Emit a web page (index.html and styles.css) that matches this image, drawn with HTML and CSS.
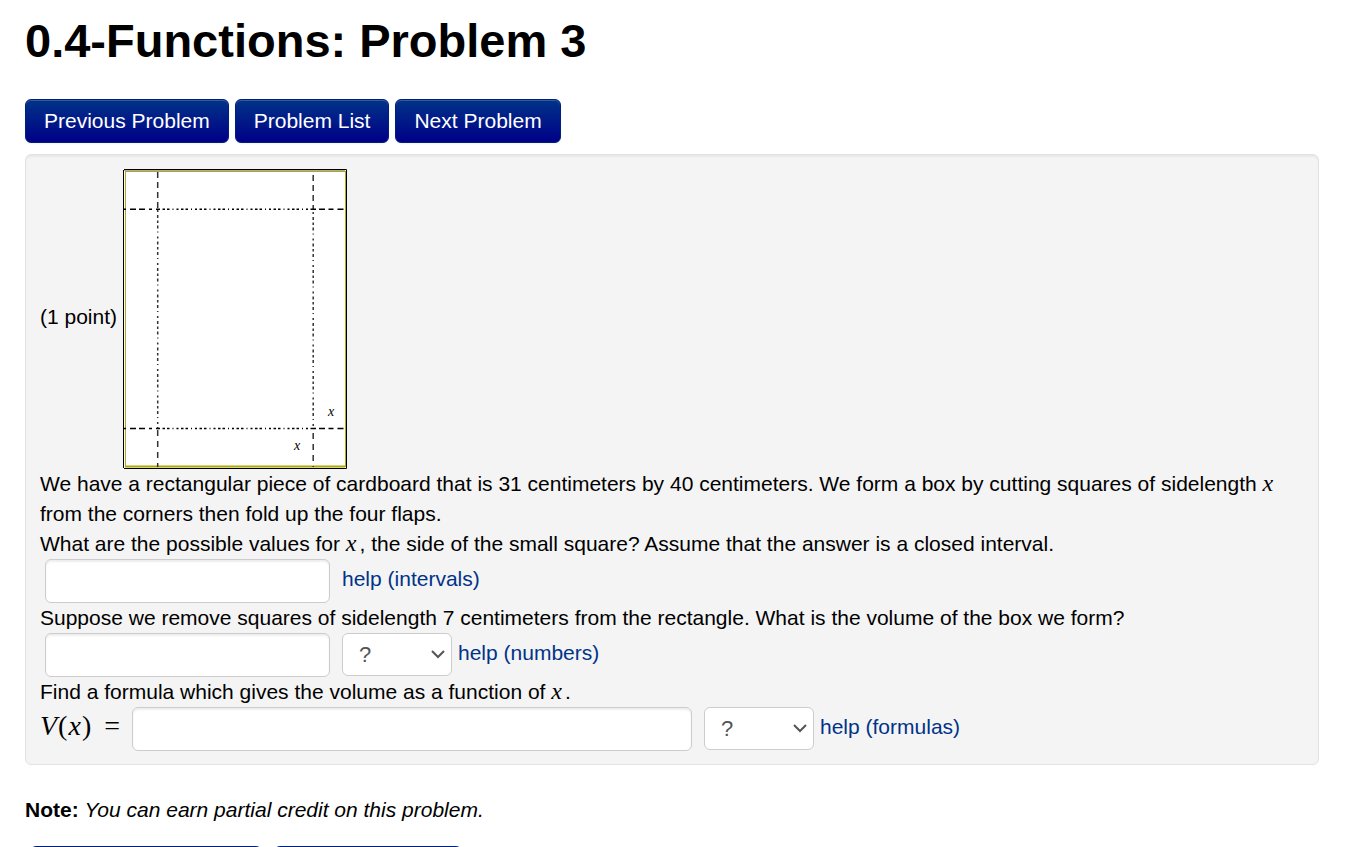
FILE: index.html
```html
<!DOCTYPE html>
<html lang="en">
<head>
<meta charset="utf-8">
<title>0.4-Functions: Problem 3</title>
<link rel="stylesheet" href="styles.css">
</head>
<body>
<main class="page">
  <h1 class="title">0.4-Functions: Problem 3</h1>
  <nav class="nav">
    <a class="btn" href="#previous">Previous Problem</a>
    <a class="btn" href="#list">Problem List</a>
    <a class="btn" href="#next">Next Problem</a>
  </nav>
  <form class="form">
    <section class="problem">
      <div class="figure-row">
        <span class="points">(1 point)</span>
        <svg class="figure" width="224" height="300" viewBox="0 0 224 300" role="img" aria-label="Rectangle with a square of side x marked at each corner">
          <rect width="224" height="300" fill="#fff"/>
          <path d="M2.500 2V298M222.500 2V298M2 2.500H222" fill="none" stroke="#b0aa1c"/>
          <path d="M1 1.500H222" stroke="#aaa"/>
          <path d="M2 297.500H222" stroke="#b0aa00" stroke-width="2"/>
          <path d="M.5 1V299M1 .5H223.500V299.500H1" fill="none" stroke="#000"/>
          <g fill="none" stroke="#333" stroke-width="1.500">
            <path d="M34.700 3V40M190.200 6V40" stroke-dasharray="6 4"/>
            <path d="M34.700 261V298M190.200 264V298" stroke-dasharray="6 5"/>
            <path d="M34.700 41V260M190.200 43V260" stroke-dasharray="2 3 3 2.500 2.500 2.500 3 3 1 4"/>
          </g>
          <g fill="none" stroke="#000" stroke-width="1.500">
            <path d="M0 40.300H35M0 259.500H35" stroke-dasharray="3 4 6 3 6 4"/>
            <path d="M190 40.300H221M190 259.500H221" stroke-dasharray="3 3 6 3.500 5 4 6 4"/>
            <path d="M35 40.300H190M35 259.500H190" stroke-dasharray="2 2.500 2.500 2 2.500 3 1 3"/>
          </g>
          <text class="figure-label" x="205" y="247">x</text>
          <text class="figure-label" x="171" y="281">x</text>
        </svg>
      </div>
      <p class="text">We have a rectangular piece of cardboard that is 31 centimeters by 40 centimeters. We form a box by cutting squares of sidelength <i class="math">x</i> from the corners then fold up the four flaps.</p>
      <p class="text"><label for="interval">What are the possible values for <i class="math">x</i>, the side of the small square? Assume that the answer is a closed interval.</label></p>
      <div class="answer">
        <input class="field" id="interval" type="text">
        <a class="help after-field" href="#intervals">help (intervals)</a>
      </div>
      <p class="text"><label for="volume">Suppose we remove squares of sidelength 7 centimeters from the rectangle. What is the volume of the box we form?</label></p>
      <div class="answer">
        <input class="field" id="volume" type="text">
        <span class="select-wrap after-field">
          <select class="select" aria-label="Volume units"><option>?</option></select>
          <svg class="chevron" width="14" height="9" viewBox="0 0 14 9"><path d="M1 1L7 7L13 1" fill="none" stroke="#555" stroke-width="2"/></svg>
        </span>
        <a class="help after-select" href="#numbers">help (numbers)</a>
      </div>
      <p class="text">Find a formula which gives the volume as a function of <i class="math">x</i>.</p>
      <div class="answer">
        <label class="formula" for="formula"><i>V</i><span>(</span><i>x</i><span>)</span><span class="equals">=</span></label>
        <input class="field field-long" id="formula" type="text">
        <span class="select-wrap after-field">
          <select class="select" aria-label="Formula units"><option>?</option></select>
          <svg class="chevron" width="14" height="9" viewBox="0 0 14 9"><path d="M1 1L7 7L13 1" fill="none" stroke="#555" stroke-width="2"/></svg>
        </span>
        <a class="help after-select" href="#formulas">help (formulas)</a>
      </div>
    </section>
    <p class="note"><b>Note:</b> <em>You can earn partial credit on this problem.</em></p>
    <div class="submit-row">
      <button class="btn" type="button">Preview My Answers</button>
      <button class="btn" type="button">Submit Answers</button>
    </div>
  </form>
</main>
</body>
</html>
```
FILE: styles.css
```css
* {
  box-sizing: border-box;
}

body {
  margin: 0;
  background: #fff;
  color: #000;
  font: 21px/30px "Liberation Sans", Arial, sans-serif;
}

.page {
  padding: 11px 44px 0 25px;
}

.title {
  margin: 0;
  font-size: 47px;
  line-height: 60px;
}

.nav {
  display: flex;
  gap: 6px;
  margin: 28px 0 11px;
}

.btn {
  height: 44px;
  padding: 0 18px;
  border: 1px solid #001f78;
  border-radius: 6px;
  background: linear-gradient(#003388, #000088);
  box-shadow: inset 0 1px 0 rgba(255, 255, 255, 0.2), 0 1px 2px rgba(0, 0, 0, 0.05);
  color: #fff;
  font: 21px/42px "Liberation Sans", Arial, sans-serif;
  text-decoration: none;
}

.problem {
  padding: 14px 14px 13px;
  border: 1px solid #e3e3e3;
  border-radius: 6px;
  background: #f4f4f4;
  box-shadow: inset 0 2px 2px rgba(0, 0, 0, 0.05);
}

.figure-row {
  display: flex;
  align-items: center;
  gap: 6px;
}

.points {
  padding-bottom: 4px;
}

.figure {
  display: block;
}

.figure-label {
  font: italic 14px "Liberation Serif", serif;
}

.text {
  margin: 0;
}

.math {
  padding-right: 3px;
  font: italic 24px/20px "Liberation Serif", serif;
}

.answer {
  display: flex;
  align-items: flex-start;
}

.field {
  width: 285px;
  height: 44px;
  margin: 0 0 0 5px;
  padding: 6px 9px;
  border: 1px solid #ccc;
  border-radius: 6px;
  background: #fff;
  box-shadow: inset 0 2px 2px rgba(0, 0, 0, 0.07);
  font: inherit;
}

.field-long {
  flex: 0 1 560px;
  min-width: 0;
  margin-left: 12px;
}

.after-field {
  margin-left: 12px;
}

.after-select {
  margin-left: 6px;
}

.select-wrap {
  position: relative;
}

.select {
  appearance: none;
  display: block;
  width: 110px;
  height: 43px;
  padding: 0 16px;
  border: 1px solid #ccc;
  border-radius: 6px;
  background: #fff;
  color: #555;
  font: 22px "Liberation Sans", Arial, sans-serif;
}

.chevron {
  position: absolute;
  right: 7px;
  top: 17px;
  pointer-events: none;
}

.help {
  color: #038;
  line-height: 40px;
  text-decoration: none;
}

.formula {
  display: flex;
  gap: 1px;
  width: 80px;
  font: 28px/38px "Liberation Serif", serif;
}

.equals {
  margin-left: auto;
}

.note {
  margin: 30px 0 21px;
}

.submit-row {
  display: flex;
  gap: 12px;
  padding: 0 5px 24px;
}
```
